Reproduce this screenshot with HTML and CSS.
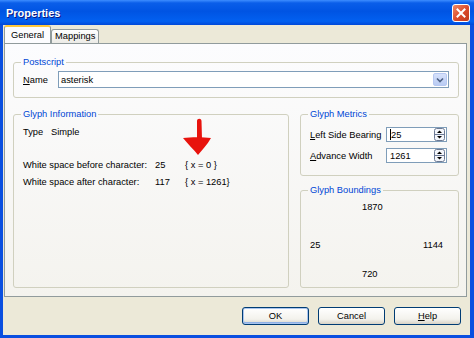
FILE: index.html
```html
<!DOCTYPE html>
<html>
<head>
  <title>Properties</title>
  <meta charset="UTF-8">
  <link rel="stylesheet" href="styles.css">
</head>
<body>
  <div class="window">
    <div class="titlebar">
      <span class="title">Properties</span>
      <span class="close">
        <svg width="10" height="10" viewBox="0 0 10 10"><path d="M1.5 1.5 L8.5 8.5 M8.5 1.5 L1.5 8.5" stroke="#fff" stroke-width="2" stroke-linecap="square"/></svg>
      </span>
    </div>

    <div class="client">
      <div class="tabs">
        <div class="tab active">General</div>
        <div class="tab">Mappings</div>
      </div>

      <div class="page">
        <fieldset class="group">
          <legend>Postscript</legend>
          <div class="ps-row">
            <span class="ps-label"><u>N</u>ame</span>
            <div class="combo">
              <span class="combo-text">asterisk</span>
              <span class="combo-btn">
                <svg width="8" height="6" viewBox="0 0 8 6"><path d="M1 1.5 L4 4.5 L7 1.5" fill="none" stroke="#4d6185" stroke-width="1.6"/></svg>
              </span>
            </div>
          </div>
        </fieldset>

        <div class="lower">
          <fieldset class="group info">
            <legend>Glyph Information</legend>
            <div class="type-row"><span class="type-label">Type</span>Simple</div>
            <div class="ws-table">
              <span>White space before character:</span><span>25</span><span>{ x = 0 }</span>
              <span>White space after character:</span><span>117</span><span>{ x = 1261}</span>
            </div>
          </fieldset>

          <fieldset class="group metrics">
            <legend>Glyph Metrics</legend>
            <div class="metric-row">
              <span class="metric-label"><u>L</u>eft Side Bearing</span>
              <div class="spin-input">
                <span class="caret"></span>25
                <svg class="spin" width="11" height="13" viewBox="0 0 11 13"><rect x=".5" y=".5" width="10" height="12" rx="2" fill="#f4f6fb" stroke="#6d7a94"/><line x1="1" y1="6.5" x2="10" y2="6.5" stroke="#6d7a94"/><path d="M3 5 L5.5 2.5 L8 5Z" fill="#000"/><path d="M3 8 L5.5 10.5 L8 8Z" fill="#000"/></svg>
              </div>
            </div>
            <div class="metric-row">
              <span class="metric-label"><u>A</u>dvance Width</span>
              <div class="spin-input">
                1261
                <svg class="spin" width="11" height="13" viewBox="0 0 11 13"><rect x=".5" y=".5" width="10" height="12" rx="2" fill="#f4f6fb" stroke="#6d7a94"/><line x1="1" y1="6.5" x2="10" y2="6.5" stroke="#6d7a94"/><path d="M3 5 L5.5 2.5 L8 5Z" fill="#000"/><path d="M3 8 L5.5 10.5 L8 8Z" fill="#000"/></svg>
              </div>
            </div>
          </fieldset>

          <fieldset class="group bounds">
            <legend>Glyph Boundings</legend>
            <div class="bound-top">1870</div>
            <div class="bound-mid"><span>25</span><span>1144</span></div>
            <div class="bound-bottom">720</div>
          </fieldset>
        </div>

        <!-- red annotation arrow drawn over the dialog -->
        <svg class="arrow" width="29" height="40" viewBox="0 0 29 40">
          <path d="M14 5 C14 2 18.5 2 18.5 5 L19 23 L14 23 Z" fill="#e8130d"/>
          <path d="M0 22 C8 21 20 21 28 22 C24 29 19 34 15 39 C11 34 5 28 0 22 Z" fill="#e8130d"/>
        </svg>
      </div>

      <div class="buttons">
        <button class="btn default">OK</button>
        <button class="btn">Cancel</button>
        <button class="btn"><u>H</u>elp</button>
      </div>
    </div>
  </div>
</body>
</html>
```

FILE: styles.css
```css
body {
  margin: 0;
  font-family: "Liberation Sans", Arial, sans-serif;
  font-size: 9.3px;
  color: #000;
}
.window {
  width: 474px;
  height: 338px;
  box-sizing: border-box;
  display: flex;
  flex-direction: column;
  background: #0a4fe0;
}
.titlebar {
  height: 25px;
  flex-shrink: 0;
  display: flex;
  align-items: center;
  justify-content: space-between;
  padding: 0 4px 0 6px;
  background: linear-gradient(#3d8dff 0, #0a5ee9 12%, #0054e3 45%, #0260f0 85%, #0048d8 100%);
}
.title {
  color: #fff;
  font-weight: bold;
  font-size: 11px;
  text-shadow: 1px 1px #0a1883;
}
.close {
  width: 18px;
  height: 18px;
  box-sizing: border-box;
  border: 1px solid #fff;
  border-radius: 3px;
  background: linear-gradient(135deg, #f08a66, #d9492a 55%, #c13b1c);
  display: flex;
  align-items: center;
  justify-content: center;
}
.client {
  flex: 1;
  margin: 0 4px 3px 3px;
  padding: 0 3px 0 1px;
  background: #ece9d8;
  display: flex;
  flex-direction: column;
}
.tabs {
  display: flex;
  align-items: flex-end;
  height: 18px;
}
.tab {
  height: 14px;
  box-sizing: border-box;
  padding: 0 3px;
  border: 1px solid #919b9c;
  border-bottom: none;
  border-radius: 3px 3px 0 0;
  background: linear-gradient(#ffffff, #ecebe6);
  line-height: 13px;
}
.tab.active {
  height: 19px;
  margin-bottom: -1px;
  padding: 2px 6px 0;
  border-top: 2px solid #ffc83c;
  background: #fcfcfe;
  position: relative;
  line-height: 13px;
}
.page {
  height: 254px;
  box-sizing: border-box;
  border: 1px solid #919b9c;
  background: linear-gradient(#fcfcfe, #f4f3ee);
  padding: 12px 7px 0 8px;
  position: relative;
}
.group {
  margin: 0;
  padding: 0 9px;
  border: 1px solid #d0d0bf;
  border-radius: 3px;
  min-width: 0;
}
.group legend {
  padding: 0 2px;
  margin-left: -2px;
  color: #0046d5;
  line-height: 12px;
}
.ps-row {
  display: flex;
  align-items: center;
  padding: 3px 0 9px;
}
.ps-label {
  width: 35px;
}
.combo {
  flex: 1;
  height: 17px;
  box-sizing: border-box;
  border: 1px solid #7f9db9;
  background: #fff;
  display: flex;
  align-items: center;
  padding-left: 2px;
}
.combo-text {
  flex: 1;
}
.combo-btn {
  width: 14px;
  height: 13px;
  margin-right: 1px;
  box-sizing: border-box;
  border: 1px solid #b7c8f2;
  border-radius: 2px;
  background: linear-gradient(#d6e1fb, #b9cbf3);
  display: flex;
  align-items: center;
  justify-content: center;
}
.lower {
  display: grid;
  grid-template-columns: 276px 1fr;
  grid-template-rows: 68px 1fr;
  column-gap: 11px;
  row-gap: 8px;
  margin-top: 10px;
  height: 180px;
}
.info {
  grid-row: 1 / 3;
}
.type-row {
  padding-top: 6px;
  line-height: 12px;
}
.type-label {
  display: inline-block;
  width: 28px;
}
.ws-table {
  display: grid;
  grid-template-columns: 132px 30px auto;
  grid-auto-rows: 12px;
  row-gap: 5px;
  margin-top: 21px;
  line-height: 12px;
}
.metric-row {
  display: flex;
  align-items: center;
  height: 15px;
  margin-top: 6px;
}
.metric-row:first-of-type {
  margin-top: 7px;
}
.metric-label {
  width: 76px;
}
.spin-input {
  width: 61px;
  height: 15px;
  box-sizing: border-box;
  border: 1px solid #7f9db9;
  background: #fff;
  display: flex;
  align-items: center;
  padding-left: 3px;
}
.caret {
  width: 1px;
  height: 11px;
  background: #000;
}
.spin {
  margin-left: auto;
  margin-right: 1px;
}
.bounds {
  line-height: 12px;
}
.bound-top {
  padding: 5px 0 0 52px;
}
.bound-mid {
  display: flex;
  justify-content: space-between;
  margin-top: 26px;
  padding-right: 6px;
}
.bound-bottom {
  margin-top: 17px;
  padding-left: 52px;
}
.arrow {
  position: absolute;
  left: 178px;
  top: 72px;
}
.buttons {
  display: flex;
  justify-content: flex-end;
  gap: 9px;
  padding: 10px 6px 0 0;
}
.btn {
  width: 67px;
  height: 18px;
  padding: 0;
  font: inherit;
  color: #000;
  border: 1px solid #003c74;
  border-radius: 3px;
  background: linear-gradient(#ffffff, #f3f2ec 70%, #d8d3c6);
}
.btn.default {
  box-shadow: inset 0 0 0 1px #a9c4ee, inset 0 -1px 0 1px #8fb1e6;
}
```
